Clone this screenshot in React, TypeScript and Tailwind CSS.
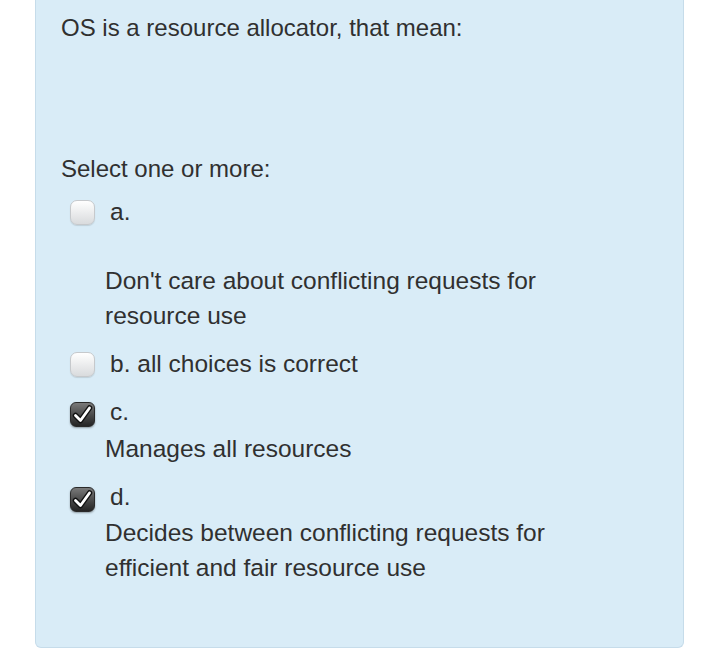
import React from "react";

type Choice = {
  letter: string;
  text?: string;
  inline?: boolean;
  checked: boolean;
  bodyGap: string;
};

const choices: Choice[] = [
  {
    letter: "a.",
    text: "Don't care about conflicting requests for resource use",
    checked: false,
    bodyGap: "mt-[34px]",
  },
  { letter: "b.", text: "all choices is correct", inline: true, checked: false, bodyGap: "" },
  { letter: "c.", text: "Manages all resources", checked: true, bodyGap: "mt-[2px]" },
  {
    letter: "d.",
    text: "Decides between conflicting requests for efficient and fair resource use",
    checked: true,
    bodyGap: "mt-[1px]",
  },
];

function CheckBox({ checked }: { checked: boolean }) {
  if (!checked) {
    return (
      <div className="mt-[6px] h-[25px] w-[25px] shrink-0 rounded-[7px] border border-[#c6c9cc] bg-gradient-to-b from-[#ffffff] to-[#d9dbdd] shadow-[0_1px_1px_rgba(0,0,0,0.12)]" />
    );
  }
  return (
    <div className="mt-[8px] flex h-[25px] w-[25px] shrink-0 items-center justify-center rounded-[6px] border border-[#2a2a2a] bg-gradient-to-b from-[#7a7a7a] to-[#242424] shadow-[0_1px_2px_rgba(0,0,0,0.35)]">
      <svg width="23" height="23" viewBox="0 0 23 23">
        <path d="M4.5 12.5 L9.5 17.5 L18.5 5" fill="none" stroke="#111" strokeWidth="5.5" strokeLinecap="round" strokeLinejoin="round" />
        <path d="M4.5 12.5 L9.5 17.5 L18.5 5" fill="none" stroke="#fff" strokeWidth="2.8" strokeLinecap="round" strokeLinejoin="round" />
      </svg>
    </div>
  );
}

function Option({ choice }: { choice: Choice }) {
  return (
    <div className="flex flex-row">
      <CheckBox checked={choice.checked} />
      <div className="ml-[10px] flex-1">
        {choice.inline ? (
          <div className="pl-[5px]">
            {choice.letter} {choice.text}
          </div>
        ) : (
          <>
            <div className="pl-[5px]">{choice.letter}</div>
            <div className={`${choice.bodyGap} w-[460px]`}>{choice.text}</div>
          </>
        )}
      </div>
    </div>
  );
}

export default function App() {
  return (
    <div className="min-h-screen w-full bg-white font-['Liberation_Sans',Arial,sans-serif] text-[#303030]">
      <div className="ml-[35px] h-[648px] w-[649px] rounded-b-[6px] border-x border-b border-[#c6dcea] bg-[#d9ecf7] pl-[25px] pt-[11px]">
        <p className="text-[24px] leading-[34px]">OS is a resource allocator, that mean:</p>

        <p className="mt-[107px] text-[24px] leading-[34px]">Select one or more:</p>

        <div className="ml-[9px] mt-[8px] flex flex-col gap-[13px] text-[24.5px] leading-[35px]">
          {choices.map((c) => (
            <Option key={c.letter} choice={c} />
          ))}
        </div>
      </div>
    </div>
  );
}
